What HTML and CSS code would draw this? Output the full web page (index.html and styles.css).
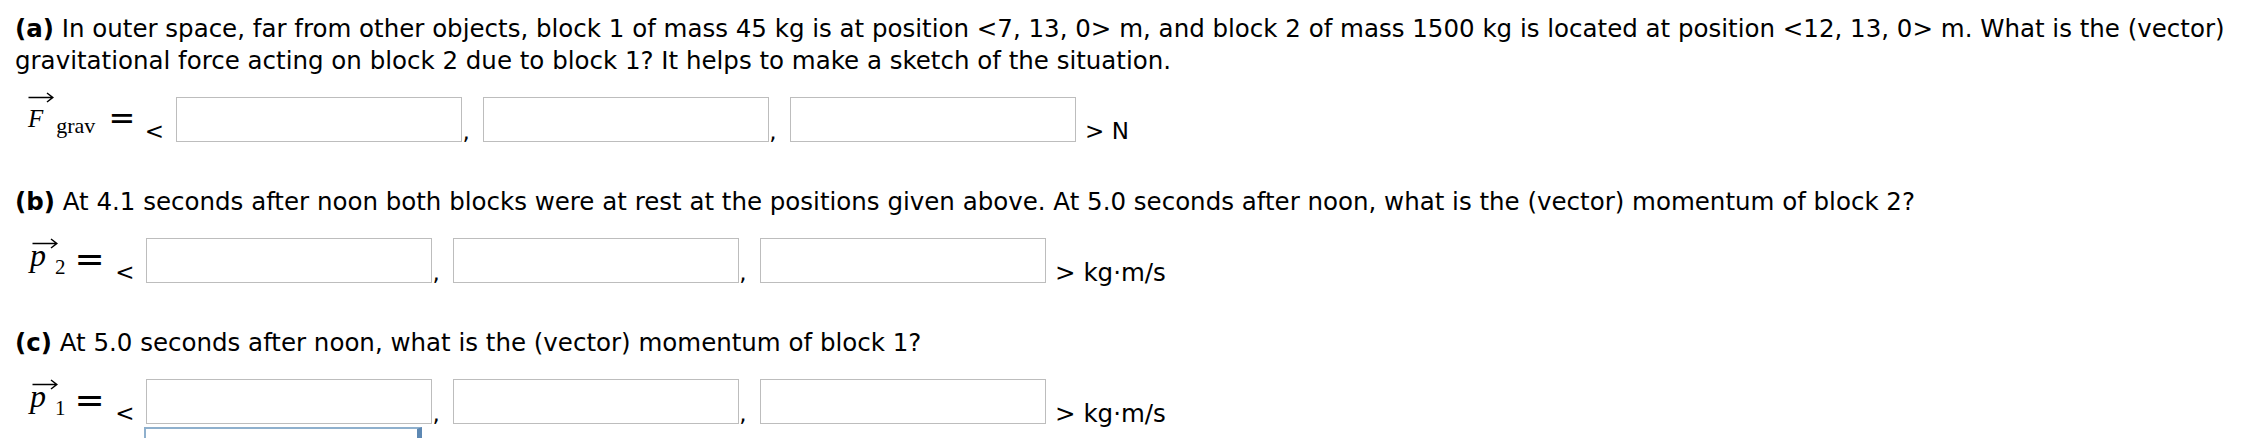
FILE: index.html
```html
<!DOCTYPE html>
<html>
<head>
<meta charset="utf-8">
<link rel="stylesheet" href="styles.css">
</head>
<body>
<div class="page">
  <section class="part">
    <p class="question"><b>(a)</b> In outer space, far from other objects, block 1 of mass 45 kg is at position &lt;7, 13, 0&gt; m, and block 2 of mass 1500 kg is located at position &lt;12, 13, 0&gt; m. What is the (vector) gravitational force acting on block 2 due to block 1? It helps to make a sketch of the situation.</p>
    <div class="answer">
      <span class="sym sym-f">F<svg class="arrow arrow-f" width="26" height="11" viewBox="0 0 26 11"><path d="M0.5 5.5 H24.5 M19 1 L24.8 5.5 L19 10" fill="none" stroke="#000" stroke-width="1.5"/></svg></span>
      <span class="sub sub-grav">grav</span>
      <span class="eq eq-f">=</span>
      <span class="lt lt-f">&lt;</span>
      <input class="field field-first-f" type="text">
      <span class="comma">,</span>
      <input class="field field-next" type="text">
      <span class="comma">,</span>
      <input class="field field-next" type="text">
      <span class="unit">&gt; N</span>
    </div>
  </section>
  <section class="part">
    <p class="question"><b>(b)</b> At 4.1 seconds after noon both blocks were at rest at the positions given above. At 5.0 seconds after noon, what is the (vector) momentum of block 2?</p>
    <div class="answer">
      <span class="sym sym-p">p<svg class="arrow arrow-p" width="26" height="11" viewBox="0 0 26 11"><path d="M0.5 5.5 H24.5 M19 1 L24.8 5.5 L19 10" fill="none" stroke="#000" stroke-width="1.5"/></svg></span>
      <span class="sub sub-num">2</span>
      <span class="eq eq-p">=</span>
      <span class="lt lt-p">&lt;</span>
      <input class="field field-first-p" type="text">
      <span class="comma">,</span>
      <input class="field field-next" type="text">
      <span class="comma">,</span>
      <input class="field field-next" type="text">
      <span class="unit unit-kg">&gt; kg·m/s</span>
    </div>
  </section>
  <section class="part">
    <p class="question"><b>(c)</b> At 5.0 seconds after noon, what is the (vector) momentum of block 1?</p>
    <div class="answer last">
      <span class="sym sym-p">p<svg class="arrow arrow-p" width="26" height="11" viewBox="0 0 26 11"><path d="M0.5 5.5 H24.5 M19 1 L24.8 5.5 L19 10" fill="none" stroke="#000" stroke-width="1.5"/></svg></span>
      <span class="sub sub-num">1</span>
      <span class="eq eq-p">=</span>
      <span class="lt lt-p">&lt;</span>
      <span class="field-wrap">
        <input class="field" type="text">
        <span class="popup"></span>
      </span>
      <span class="comma">,</span>
      <input class="field field-next" type="text">
      <span class="comma">,</span>
      <input class="field field-next" type="text">
      <span class="unit unit-kg">&gt; kg·m/s</span>
    </div>
  </section>
</div>
</body>
</html>
```
FILE: styles.css
```css
html, body {
  margin: 0;
  padding: 0;
  background: #fff;
}
body {
  font-family: "DejaVu Sans", Verdana, sans-serif;
  color: #000;
  height: 438px;
  overflow: hidden;
}
.page {
  padding: 12.5px 15px 0 15px;
}
.question {
  margin: 0 0 20px 0;
  font-size: 24.5px;
  line-height: 32px;
}
.question b {
  font-weight: bold;
}
.answer {
  display: flex;
  align-items: flex-end;
  margin-bottom: 44px;
}
.answer.last {
  margin-bottom: 0;
}
.sym {
  position: relative;
  font-family: "Liberation Serif", "Times New Roman", serif;
  font-style: italic;
  line-height: 1;
}
.sym-f {
  font-size: 25px;
  margin-left: 13px;
  margin-bottom: 11px;
}
.sym-p {
  font-size: 32px;
  margin-left: 15px;
  margin-bottom: 12px;
}
.arrow {
  position: absolute;
  left: 0;
}
.arrow-f {
  top: -14px;
}
.arrow-p {
  top: -1px;
  left: 2px;
}
.sub {
  font-family: "Liberation Serif", "Times New Roman", serif;
  line-height: 1;
}
.sub-grav {
  font-size: 22px;
  margin-left: 13px;
  margin-bottom: 5px;
}
.sub-num {
  font-size: 21px;
  margin-left: 9px;
  margin-bottom: 5px;
}
.eq {
  font-family: "DejaVu Sans", sans-serif;
  line-height: 1;
}
.eq-f {
  font-size: 32px;
  margin-left: 13px;
  margin-bottom: 8px;
}
.eq-p {
  font-size: 36px;
  margin-left: 9px;
  margin-bottom: 6px;
}
.lt, .comma, .unit {
  font-family: "DejaVu Sans", sans-serif;
  font-size: 23px;
  line-height: 23px;
  margin-bottom: -1px;
}
.lt-f {
  margin-left: 9.5px;
}
.lt-p {
  margin-left: 10.5px;
}
.field {
  display: block;
  box-sizing: border-box;
  width: 286px;
  height: 45px;
  margin: 0;
  padding: 0 4px;
  border: 1px solid #bdbdbd;
  background: #fff;
  font: 20px "DejaVu Sans", sans-serif;
  outline: none;
}
.field-first-f {
  margin-left: 12.5px;
}
.field-first-p {
  margin-left: 12px;
}
.field-wrap {
  position: relative;
  display: block;
  margin-left: 12px;
}
.field-next {
  margin-left: 13.5px;
}
.unit {
  margin-left: 9px;
}
.unit-kg {
  font-size: 24.5px;
}
.popup {
  position: absolute;
  left: -2px;
  top: 48px;
  width: 278px;
  height: 30px;
  box-sizing: border-box;
  border: 2px solid #8fb0cd;
  border-right: 5px solid #5d88b3;
  background: #fff;
}
```
